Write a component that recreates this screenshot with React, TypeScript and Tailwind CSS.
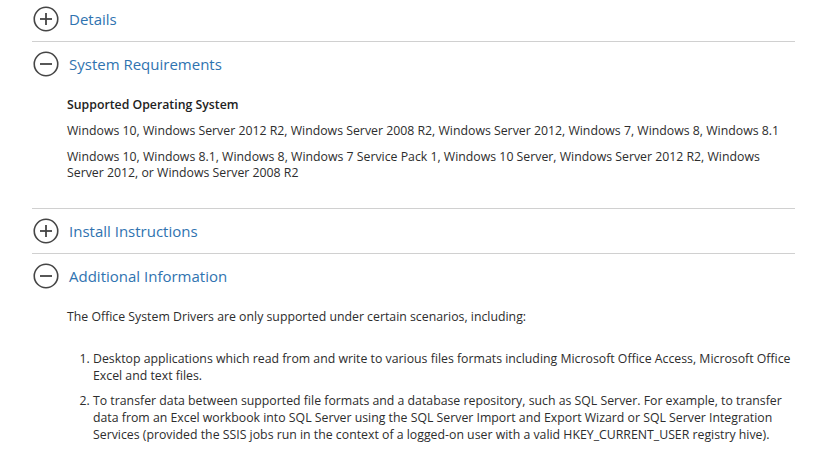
import React from "react";

function PlusIcon() {
  return (
    <svg width="26" height="26" viewBox="0 0 26 26" className="shrink-0">
      <circle cx="13" cy="13" r="11.75" fill="none" stroke="#454545" strokeWidth="1.6" />
      <line x1="7" y1="13" x2="19" y2="13" stroke="#454545" strokeWidth="1.8" />
      <line x1="13" y1="7" x2="13" y2="19" stroke="#454545" strokeWidth="1.8" />
    </svg>
  );
}

function MinusIcon() {
  return (
    <svg width="26" height="26" viewBox="0 0 26 26" className="shrink-0">
      <circle cx="13" cy="13" r="11.75" fill="none" stroke="#454545" strokeWidth="1.6" />
      <line x1="7" y1="13" x2="19" y2="13" stroke="#454545" strokeWidth="1.8" />
    </svg>
  );
}

function Header({ title, open }: { title: string; open?: boolean }) {
  return (
    <div className="flex h-[44px] items-center gap-[10px] pl-[1px]">
      {open ? <MinusIcon /> : <PlusIcon />}
      <span className="text-[15px] text-[#2f73b0] leading-none">{title}</span>
    </div>
  );
}

export default function App() {
  return (
    <div
      className="bg-white w-[824px] h-[474px] overflow-hidden text-[#2d2d2d]"
      style={{ fontFamily: '"Open Sans", "Noto Sans", Arial, sans-serif' }}
    >
      <div className="ml-[32px] w-[763px] mt-[-3px]">
        <div className="border-b border-[#d0d0d0]">
          <Header title="Details" />
        </div>
        <div className="border-b border-[#d0d0d0]">
          <Header title="System Requirements" open />
          <div className="pl-[35px] pt-[10px] pb-[27px] text-[12.3px] leading-[17px]">
            <div className="font-semibold text-[#222]">Supported Operating System</div>
            <p className="mt-[9px]">
              Windows 10, Windows Server 2012 R2, Windows Server 2008 R2, Windows Server 2012, Windows 7, Windows 8, Windows 8.1
            </p>
            <p className="mt-[10px] leading-[16px]">
              Windows 10, Windows 8.1, Windows 8, Windows 7 Service Pack 1, Windows 10 Server, Windows Server 2012 R2, Windows Server 2012, or Windows Server 2008 R2
            </p>
          </div>
        </div>
        <div className="border-b border-[#d0d0d0]">
          <Header title="Install Instructions" />
        </div>
        <div>
          <Header title="Additional Information" open />
          <div className="pl-[35px] pt-[10px] text-[12.3px] leading-[17px]">
            <p>The Office System Drivers are only supported under certain scenarios, including:</p>
            <ol className="list-decimal pl-[26px] mt-[25px] pr-[2px]">
              <li>
                Desktop applications which read from and write to various files formats including Microsoft Office Access, Microsoft Office Excel and text files.
              </li>
              <li className="mt-[8px]">
                To transfer data between supported file formats and a database repository, such as SQL Server. For example, to transfer data from an Excel workbook into SQL Server using the SQL Server Import and Export Wizard or SQL Server Integration Services (provided the SSIS jobs run in the context of a logged-on user with a valid HKEY_CURRENT_USER registry hive).
              </li>
            </ol>
          </div>
        </div>
      </div>
    </div>
  );
}
